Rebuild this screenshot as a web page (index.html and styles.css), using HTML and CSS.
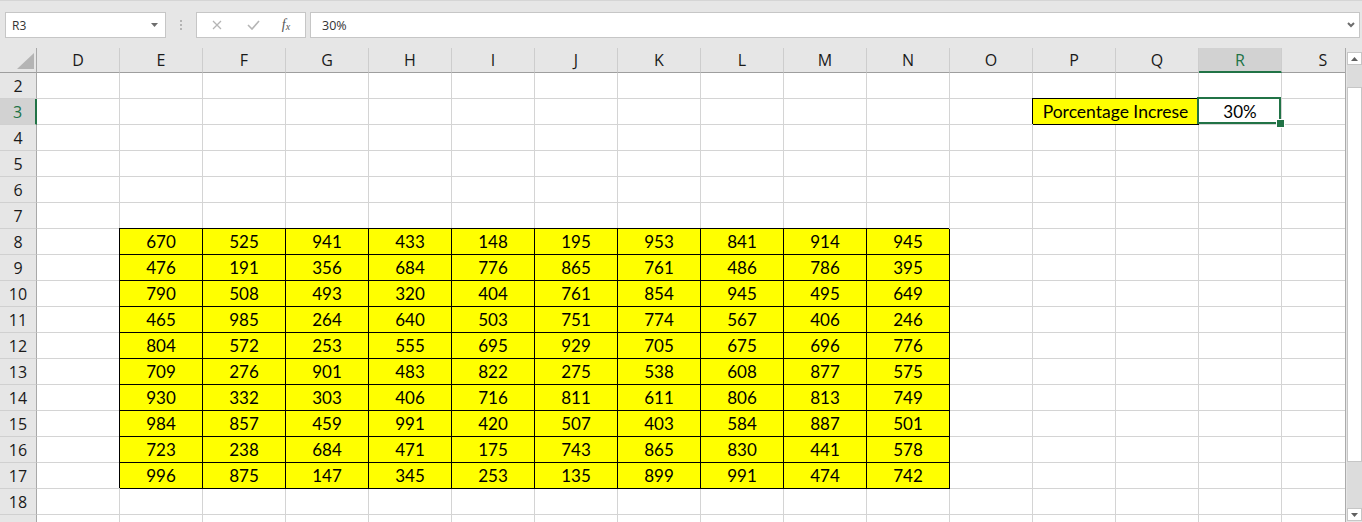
FILE: index.html
```html
<!DOCTYPE html>
<html lang="en">
<head>
    <meta charset="UTF-8">
    <title>Book1 - Excel</title>
    <link rel="stylesheet" href="styles.css">
</head>
<body>
    <div class="toolbar">
        <div class="name-box">
            <span>R3</span>
            <svg width="7" height="4" viewBox="0 0 7 4"><path d="M0 0h7L3.5 4z" fill="#6d6d6d"/></svg>
        </div>
        <div class="grip"><i></i><i></i><i></i></div>
        <div class="fx-box">
            <span class="fx-btn w1">
                <svg width="10" height="10" viewBox="0 0 10 10"><path d="M1 1l8 8M9 1l-8 8" stroke="#b5b5b5" stroke-width="1.3"/></svg>
            </span>
            <span class="fx-btn w2">
                <svg width="13" height="10" viewBox="0 0 13 10"><path d="M1 5l4 4 7-8" fill="none" stroke="#b5b5b5" stroke-width="1.6"/></svg>
            </span>
            <span class="fx-btn w3 fx-label">f<small>x</small></span>
        </div>
        <div class="formula">
            <span>30%</span>
            <svg width="8" height="6" viewBox="0 0 8 6"><path d="M1 1l3 3 3-3" fill="none" stroke="#6d6d6d" stroke-width="2"/></svg>
        </div>
    </div>

    <div class="sheet">
        <div class="grid-wrap">
            <div class="grid" id="grid"></div>
        </div>
        <div class="vscroll">
            <div class="sb-btn">
                <svg width="7" height="4" viewBox="0 0 7 4"><path d="M0 4h7L3.5 0z" fill="#606060"/></svg>
            </div>
            <div class="sb-track"><div class="sb-thumb"></div></div>
            <div class="sb-btn">
                <svg width="7" height="4" viewBox="0 0 7 4"><path d="M0 0h7L3.5 4z" fill="#606060"/></svg>
            </div>
        </div>
    </div>

    <script>
        const cols = 'DEFGHIJKLMNOPQRS'.split('');
        const data = [
            [670, 525, 941, 433, 148, 195, 953, 841, 914, 945],
            [476, 191, 356, 684, 776, 865, 761, 486, 786, 395],
            [790, 508, 493, 320, 404, 761, 854, 945, 495, 649],
            [465, 985, 264, 640, 503, 751, 774, 567, 406, 246],
            [804, 572, 253, 555, 695, 929, 705, 675, 696, 776],
            [709, 276, 901, 483, 822, 275, 538, 608, 877, 575],
            [930, 332, 303, 406, 716, 811, 611, 806, 813, 749],
            [984, 857, 459, 991, 420, 507, 403, 584, 887, 501],
            [723, 238, 684, 471, 175, 743, 865, 830, 441, 578],
            [996, 875, 147, 345, 253, 135, 899, 991, 474, 742]
        ];
        const grid = document.getElementById('grid');

        function cell(cls, text) {
            const d = document.createElement('div');
            d.className = 'c ' + cls;
            if (text !== undefined) d.textContent = text;
            grid.appendChild(d);
            return d;
        }

        // header row
        cell('corner').innerHTML = '<span class="tri"></span>';
        cols.forEach(c => cell('ch' + (c === 'R' ? ' on' : ''), c));

        // row 19 only peeks in at the bottom edge, its number is below the fold
        for (let r = 2; r <= 19; r++) {
            cell('rh' + (r === 3 ? ' on' : ''), r < 19 ? r : '');
            cols.forEach((c, i) => {
                if (r === 3 && c === 'Q') return; // merged into P3
                if (r === 3 && c === 'P') return cell('hl span2', 'Porcentage Increse');
                if (r === 3 && c === 'R') return cell('sel', '30%');
                if (r >= 8 && r <= 17 && i >= 1 && i <= 10) return cell('hl', data[r - 8][i - 1]);
                cell('');
            });
        }
    </script>
</body>
</html>
```

FILE: styles.css
```css
* { margin: 0; padding: 0; box-sizing: border-box; }
body {
    background: #e6e6e6;
    font-family: "Open Sans", "Liberation Sans", sans-serif;
    height: 522px; overflow: hidden;
}

/* formula bar */
.toolbar {
    height: 48px; border-top: 1px solid #d5d5d5;
    display: flex; align-items: flex-start;
    padding: 11px 2px 0 5px;
}
.name-box {
    width: 161px; height: 26px; background: #fff; border: 1px solid #c6c6c6;
    display: flex; align-items: center; justify-content: space-between;
    padding: 0 7px 0 6px; font-size: 12px; color: #333;
}
.grip {
    width: 30px; height: 26px; display: flex; flex-direction: column;
    align-items: center; justify-content: center; gap: 2px;
}
.grip i { width: 2px; height: 2px; background: #b4b4b4; display: block; }
.fx-box {
    width: 110px; height: 26px; background: #fff; border: 1px solid #c6c6c6;
    display: flex; align-items: center;
}
.fx-btn { display: flex; justify-content: center; align-items: center; height: 100%; }
.fx-btn.w1 { width: 40px; }
.fx-btn.w2 { width: 32px; }
.fx-btn.w3 { width: 34px; }
.fx-label {
    font-family: "Liberation Serif", serif; font-style: italic;
    font-size: 14px; color: #555;
}
.fx-label small { font-size: 10px; margin-top: 3px; }
.formula {
    margin-left: 4px; flex: 1; height: 26px; background: #fff; border: 1px solid #c6c6c6;
    display: flex; align-items: center; justify-content: space-between;
    padding: 0 4px 0 11px; font-size: 12.5px; color: #333;
}

/* sheet */
.sheet { display: flex; height: 474px; }
.grid-wrap { width: 1346px; overflow: hidden; border-right: 1px solid #ababab; }
.grid {
    display: grid;
    grid-template-columns: 37px repeat(16, 83px);
    grid-template-rows: 25px;
    grid-auto-rows: 26px;
}
.c {
    border-right: 1px solid #d4d4d4; border-bottom: 1px solid #d4d4d4;
    background: #fff;
    display: flex; align-items: center; justify-content: center;
    font-family: Lato, "Liberation Sans", sans-serif; font-size: 17px; color: #000;
    white-space: nowrap;
}
.c.corner {
    background: #e6e6e6; border-right-color: #a8a8a8; border-bottom-color: #9e9e9e;
    align-items: flex-end; justify-content: flex-end; padding: 0 2px 3px 0;
}
.corner .tri {
    width: 17px; height: 16px; background: #b4b4b4;
    clip-path: polygon(100% 0, 100% 100%, 0 100%);
}
.c.ch {
    background: #e6e6e6; border-right-color: #cdcdcd; border-bottom-color: #9e9e9e;
    font-family: "Open Sans", "Liberation Sans", sans-serif; font-size: 16px; color: #1a1a1a;
}
.c.rh {
    background: #e6e6e6; border-right-color: #a8a8a8; border-bottom-color: #d0d0d0;
    font-family: "Open Sans", "Liberation Sans", sans-serif; font-size: 16px; color: #1a1a1a;
}
.c.ch.on { background: #d2d2d2; border-bottom: 2px solid #217346; color: #217346; }
.c.rh.on { background: #d2d2d2; border-right: 2px solid #217346; color: #217346; }

.c.hl {
    background: #ffff00;
    border-right-color: #000; border-bottom-color: #000;
    box-shadow: -1px -1px 0 #000;
}
.c.span2 { grid-column: span 2; font-size: 17.5px; }

.c.sel { position: relative; }
.c.sel::before {
    content: ''; position: absolute; top: -2px; left: -2px; right: 0; bottom: 0;
    border: 2px solid #217346;
}
.c.sel::after {
    content: ''; position: absolute; right: -4px; bottom: -4px;
    width: 7px; height: 7px; background: #217346; border: 1px solid #fff;
}

/* vertical scrollbar */
.vscroll {
    width: 16px; display: flex; flex-direction: column;
    padding: 4px 0 1px 1px;
}
.sb-btn {
    height: 13px; background: #fff; border: 1px solid #c6c6c6;
    display: flex; align-items: center; justify-content: center;
}
.sb-track {
    flex: 1; background: #dcdcdc; padding: 22px 0 46px;
    display: flex; flex-direction: column;
}
.sb-thumb { flex: 1; background: #fff; border: 1px solid #c6c6c6; }
```
